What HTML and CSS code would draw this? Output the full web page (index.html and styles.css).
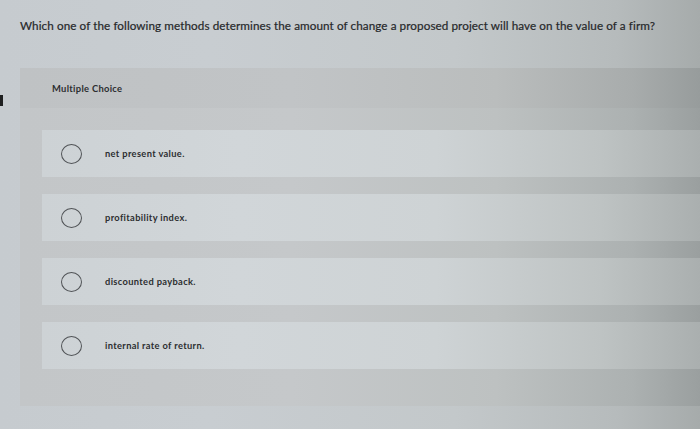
FILE: index.html
```html
<!DOCTYPE html>
<html>
<head>
<meta charset="utf-8">
<link rel="stylesheet" href="styles.css">
</head>
<body>
<div class="page">
  <div class="gutter"><span class="edge-mark"></span></div>
  <main class="main">
    <p class="question">Which one of the following methods determines the amount of change a proposed project will have on the value of a firm?</p>
    <section class="panel">
      <div class="panel-header">Multiple Choice</div>
      <div class="options">
        <div class="option"><span class="radio"></span><span class="label">net present value.</span></div>
        <div class="option"><span class="radio"></span><span class="label">profitability index.</span></div>
        <div class="option"><span class="radio"></span><span class="label">discounted payback.</span></div>
        <div class="option"><span class="radio"></span><span class="label">internal rate of return.</span></div>
      </div>
    </section>
  </main>
</div>
</body>
</html>
```
FILE: styles.css
```css
html, body {
  margin: 0;
  padding: 0;
}
body {
  width: 700px;
  height: 429px;
  overflow: hidden;
  font-family: Lato, "Open Sans", "Liberation Sans", sans-serif;
  color: #2a2c2e;
  background: linear-gradient(to right, #c6cbcf 0%, #c8cdd1 30%, #c3c8ca 65%, #b6bbbc 88%, #a6abab 100%);
}
.page {
  display: flex;
  height: 429px;
}
.gutter {
  width: 20px;
  flex: none;
  display: flex;
  flex-direction: column;
}
.edge-mark {
  display: block;
  width: 3px;
  height: 11px;
  margin-top: 95px;
  background: #1e1f20;
}
.main {
  flex: 1;
  display: flex;
  flex-direction: column;
}
.question {
  margin: 17px 0 0 0;
  font-size: 11.7px;
  font-weight: 400;
  line-height: 16px;
  letter-spacing: 0.08px;
  color: #26282a;
  -webkit-text-stroke: 0.2px #26282a;
}
.panel {
  margin-top: 35px;
  height: 338px;
  display: flex;
  flex-direction: column;
  background: linear-gradient(to right, #c3c6c8 0%, #c5c8ca 40%, #bdc1c1 70%, #acb1b1 90%, #9a9f9f 100%);
}
.panel-header {
  height: 40px;
  flex: none;
  display: flex;
  align-items: center;
  padding-left: 32px;
  font-size: 9.4px;
  font-weight: 700;
  letter-spacing: 0.3px;
  color: #2c2e30;
  background: linear-gradient(to right, #bfc2c4 0%, #c1c4c6 40%, #babdbd 70%, #a8acac 90%, #979c9c 100%);
}
.options {
  display: flex;
  flex-direction: column;
  gap: 17px;
  padding: 22px 0 0 22px;
}
.option {
  height: 47px;
  display: flex;
  align-items: center;
  background: linear-gradient(to right, #cdd2d5 0%, #d1d6d9 30%, #ced3d5 60%, #bec3c3 85%, #aaafaf 100%);
}
.radio {
  width: 19px;
  height: 18px;
  margin-left: 19px;
  border: 1.5px solid #505356;
  border-radius: 50%;
  flex: none;
}
.label {
  margin-left: 23px;
  font-size: 9.3px;
  font-weight: 700;
  letter-spacing: 0.35px;
  color: #2c2e30;
}
```
